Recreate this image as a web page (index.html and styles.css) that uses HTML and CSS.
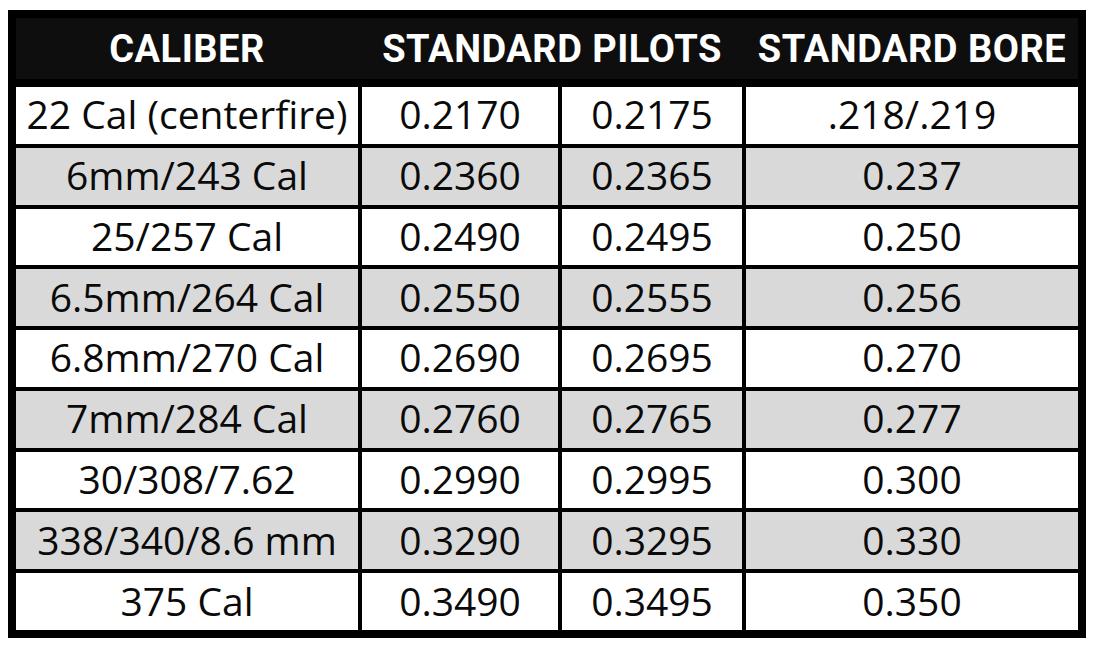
FILE: index.html
```html
<!DOCTYPE html>
<html>
<head>
<meta charset="utf-8">
<link rel="stylesheet" href="styles.css">
</head>
<body>
<div class="sheet">
  <div class="head">
    <div class="hcell">CALIBER</div>
    <div class="hcell span2">STANDARD PILOTS</div>
    <div class="hcell">STANDARD BORE</div>
  </div>
  <div class="grid">
    <div class="row"><div class="cell">22 Cal (centerfire)</div><div class="cell">0.2170</div><div class="cell">0.2175</div><div class="cell">.218/.219</div></div>
    <div class="row alt"><div class="cell">6mm/243 Cal</div><div class="cell">0.2360</div><div class="cell">0.2365</div><div class="cell">0.237</div></div>
    <div class="row"><div class="cell">25/257 Cal</div><div class="cell">0.2490</div><div class="cell">0.2495</div><div class="cell">0.250</div></div>
    <div class="row alt"><div class="cell">6.5mm/264 Cal</div><div class="cell">0.2550</div><div class="cell">0.2555</div><div class="cell">0.256</div></div>
    <div class="row"><div class="cell">6.8mm/270 Cal</div><div class="cell">0.2690</div><div class="cell">0.2695</div><div class="cell">0.270</div></div>
    <div class="row alt"><div class="cell">7mm/284 Cal</div><div class="cell">0.2760</div><div class="cell">0.2765</div><div class="cell">0.277</div></div>
    <div class="row"><div class="cell">30/308/7.62</div><div class="cell">0.2990</div><div class="cell">0.2995</div><div class="cell">0.300</div></div>
    <div class="row alt"><div class="cell">338/340/8.6 mm</div><div class="cell">0.3290</div><div class="cell">0.3295</div><div class="cell">0.330</div></div>
    <div class="row"><div class="cell">375 Cal</div><div class="cell">0.3490</div><div class="cell">0.3495</div><div class="cell">0.350</div></div>
  </div>
</div>
</body>
</html>
```
FILE: styles.css
```css
html, body {
  margin: 0;
  padding: 0;
  background: #ffffff;
}

.sheet {
  margin: 10px 0 0 8px;
  width: 1078px;
  box-sizing: border-box;
  background: #000000;
  padding: 8px;
}

.head {
  display: grid;
  grid-template-columns: 342px 196px 180px 332px;
  column-gap: 4px;
  height: 61px;
  margin-bottom: 8px;
  background: #0e0e0e;
  color: #ffffff;
  font-family: Roboto, "Liberation Sans", sans-serif;
  font-weight: 700;
  font-size: 38px;
  letter-spacing: 0.5px;
}

.hcell {
  display: flex;
  align-items: center;
  justify-content: center;
  white-space: nowrap;
}

.span2 {
  grid-column: 2 / 4;
}

.grid {
  display: grid;
  grid-template-columns: 342px 196px 180px 332px;
  grid-template-rows: repeat(9, 1fr);
  gap: 4px;
  height: 543px;
}

.row {
  display: contents;
}

.cell {
  display: flex;
  align-items: center;
  justify-content: center;
  box-sizing: border-box;
  padding-bottom: 3px;
  background: #ffffff;
  color: #0a0a0a;
  font-family: "Open Sans", sans-serif;
  font-size: 39px;
  white-space: nowrap;
}

.row.alt .cell {
  background: #d9d9d9;
}
```
